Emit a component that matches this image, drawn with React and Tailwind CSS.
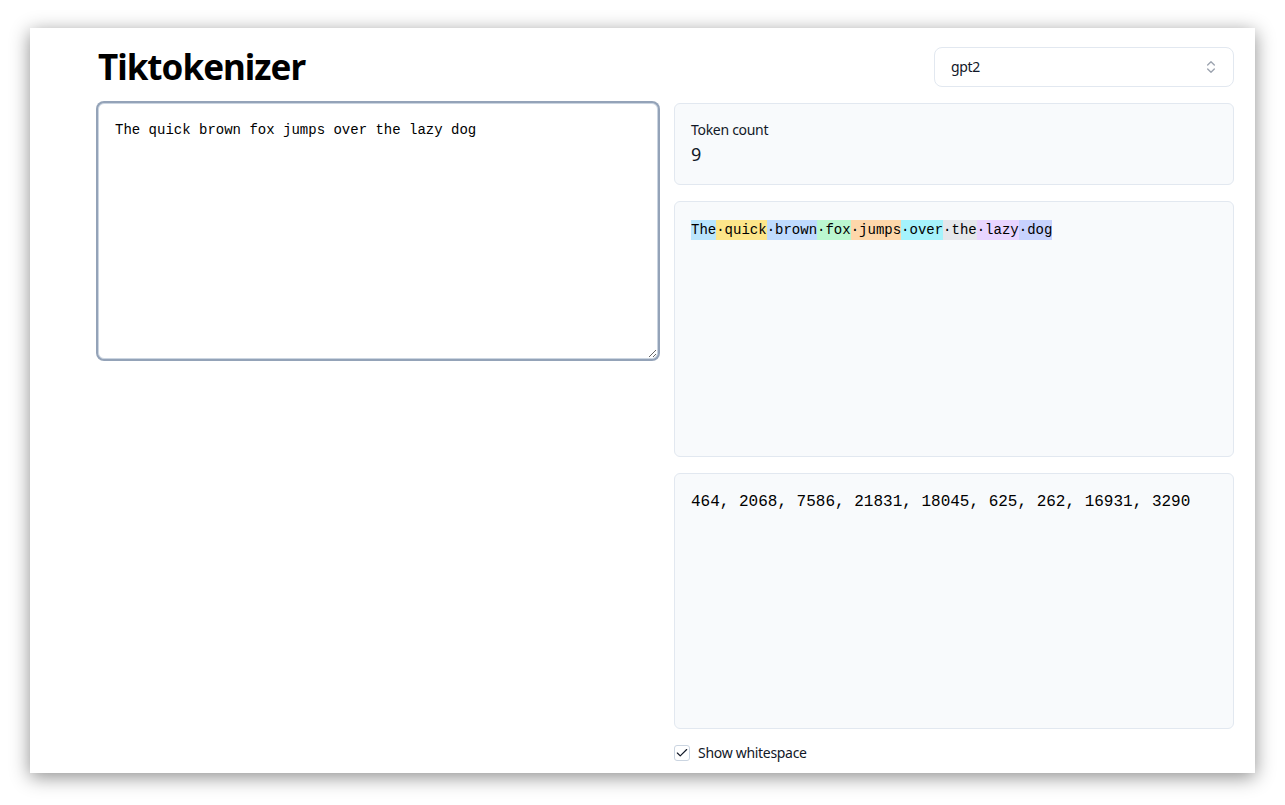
import { ChevronsUpDown, Check } from 'lucide-react'

const sans = { fontFamily: '"Noto Sans", "Open Sans", sans-serif' }

// gpt2 tokens for the sample sentence, whitespace shown as "·"
const tokens = [
  { text: 'The', color: 'bg-[#bae6fd]' },
  { text: '·quick', color: 'bg-[#fde68a]' },
  { text: '·brown', color: 'bg-[#bfdbfe]' },
  { text: '·fox', color: 'bg-[#bbf7d0]' },
  { text: '·jumps', color: 'bg-[#fed7aa]' },
  { text: '·over', color: 'bg-[#a5f3fc]' },
  { text: '·the', color: 'bg-[#e5e7eb]' },
  { text: '·lazy', color: 'bg-[#e9d5ff]' },
  { text: '·dog', color: 'bg-[#c7d2fe]' },
]

const ids = [464, 2068, 7586, 21831, 18045, 625, 262, 16931, 3290]

export default function App() {
  return (
    <div className="min-h-screen bg-white pt-[28px] pl-[30px]" style={sans}>
      <div className="w-[1225px] h-[745px] bg-white overflow-hidden shadow-[0_4px_18px_rgba(0,0,0,0.45)]">
        <div className="pt-[19px] pl-[68px] pr-[21px] flex flex-col gap-4 text-[#0f172a]">

          {/* ── Header ── */}
          <div className="flex items-center justify-between">
            <h1 className="text-[35px] leading-10 font-bold tracking-[-1px] text-black">Tiktokenizer</h1>
            <div className="w-[300px] h-10 flex items-center justify-between pl-4 pr-[14px] bg-white border border-[#e2e8f0] rounded-lg text-sm text-[#111827]">
              <span className="tracking-[-0.3px]">gpt2</span>
              <ChevronsUpDown size={16} className="text-[#9ca3af]" />
            </div>
          </div>

          {/* ── Main grid ── */}
          <div className="grid grid-cols-2 gap-4">
            <div>
              <textarea
                defaultValue="The quick brown fox jumps over the lazy dog"
                className="block w-full h-64 p-4 text-sm leading-5 text-black bg-white border border-[#cbd5e1] rounded-md outline-none shadow-[0_0_0_2px_#94a3b8]"
                style={{ fontFamily: '"Liberation Mono", monospace' }}
              />
            </div>

            <div className="flex flex-col gap-4">
              <div className="p-4 bg-[#f8fafc] border border-[#e2e8f0] rounded-md">
                <div className="text-sm leading-5 tracking-[-0.3px] text-[#111827]">Token count</div>
                <div className="text-lg leading-7 text-[#111827]">{tokens.length}</div>
              </div>

              <pre
                className="h-64 p-4 bg-[#f8fafc] border border-[#e2e8f0] rounded-md text-base leading-6 text-black whitespace-pre-wrap"
                style={{ fontFamily: '"Liberation Mono", monospace' }}
              >
                {tokens.map((t, i) => (
                  <span key={i} className={`inline-block text-sm leading-5 ${t.color}`}>
                    {t.text}
                  </span>
                ))}
              </pre>

              <pre
                className="h-64 p-4 bg-[#f8fafc] border border-[#e2e8f0] rounded-md text-base leading-6 text-black whitespace-pre-wrap"
                style={{ fontFamily: '"Liberation Mono", monospace' }}
              >
                {ids.join(', ')}
              </pre>

              <label className="flex items-center gap-2 text-sm leading-4 tracking-[-0.3px] text-[#111827]">
                <span className="w-4 h-4 flex items-center justify-center bg-white border border-[#cbd5e1] rounded-[3px]">
                  <Check size={14} strokeWidth={2} className="text-[#111827]" />
                </span>
                Show whitespace
              </label>
            </div>
          </div>
        </div>
      </div>
    </div>
  )
}
